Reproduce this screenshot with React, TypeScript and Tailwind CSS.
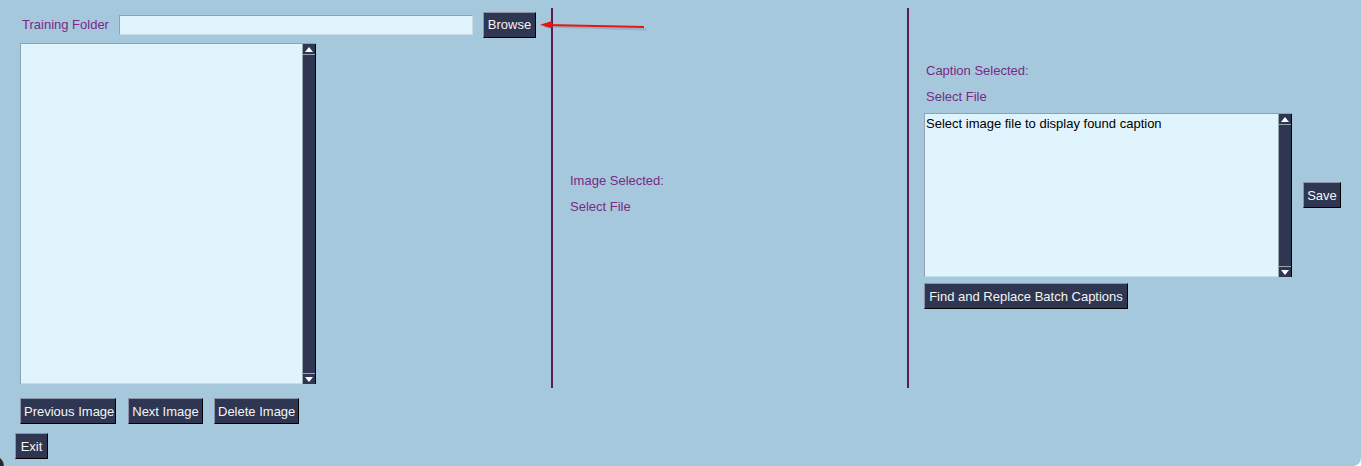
import React from "react";

const font = { fontFamily: '"Liberation Sans", Arial, sans-serif' };

function TkButton({ children, className = "" }: { children: React.ReactNode; className?: string }) {
  return (
    <button
      className={`h-[26px] px-[3px] bg-[#2e3651] text-[#f4f4f4] text-[13px] leading-none whitespace-nowrap border border-t-[#8c93a6] border-l-[#8c93a6] border-b-black border-r-black ${className}`}
    >
      {children}
    </button>
  );
}

function Scrollbar() {
  return (
    <div className="w-[14px] h-full flex flex-col bg-[#2e3651] border-l border-[#9aa6b2] border-r border-r-black">
      <div className="h-[11px] flex items-center justify-center border-b border-[#9aa6b2]">
        <svg width="8" height="5" viewBox="0 0 8 5">
          <path d="M0 5 L4 0 L8 5 Z" fill="#ffffff" />
        </svg>
      </div>
      <div className="flex-1" />
      <div className="h-[11px] flex items-center justify-center border-t border-[#9aa6b2]">
        <svg width="8" height="5" viewBox="0 0 8 5">
          <path d="M0 0 L4 5 L8 0 Z" fill="#ffffff" />
        </svg>
      </div>
    </div>
  );
}

export default function App() {
  return (
    <div className="relative w-[1361px] h-[466px] bg-[#a6c8dc] overflow-hidden rounded-br-[8px]" style={font}>
      <div className="flex">
        {/* Left column */}
        <div className="w-[551px] pl-[20px] pt-[12px]">
          <div className="flex items-center h-[25px]">
            <span className="ml-[2px] w-[97px] text-[13px] text-[#7a2a86]">Training Folder</span>
            <input
              className="w-[354px] h-[20px] bg-[#e0f4fe] border border-[#8ea2b0] border-b-[#c8dce8] border-r-[#c8dce8] outline-none"
              defaultValue=""
            />
            <TkButton className="ml-[10px] w-[53px]">Browse</TkButton>
          </div>

          <div className="mt-[6px] flex w-[296px] h-[341px] border-t border-l border-[#8ea2b0]">
            <div className="flex-1 bg-[#e0f4fe] border-b border-[#c8dce8]" />
            <Scrollbar />
          </div>

          <div className="mt-[14px] flex">
            <TkButton className="w-[96px]">Previous Image</TkButton>
            <TkButton className="ml-[12px] w-[75px]">Next Image</TkButton>
            <TkButton className="ml-[11px] w-[85px]">Delete Image</TkButton>
          </div>

          <div className="mt-[9px] -ml-[5px]">
            <TkButton className="w-[33px]">Exit</TkButton>
          </div>
        </div>

        <div className="mt-[8px] w-[2px] h-[380px] bg-[#5c1a55]" />

        {/* Middle column */}
        <div className="w-[354px] pl-[17px] pt-[168px] text-[13px] text-[#7a2a86]">
          <div className="h-[26px] leading-[26px]">Image Selected:</div>
          <div className="h-[26px] leading-[26px]">Select File</div>
        </div>

        <div className="mt-[8px] w-[2px] h-[380px] bg-[#5c1a55]" />

        {/* Right column */}
        <div className="flex-1 pl-[15px] pt-[58px]">
          <div className="pl-[2px] text-[13px] text-[#7a2a86]">
            <div className="h-[26px] leading-[26px]">Caption Selected:</div>
            <div className="h-[26px] leading-[26px]">Select File</div>
          </div>
          <div className="mt-[3px] flex items-center">
            <div className="flex w-[368px] h-[164px] border-t border-l border-[#8ea2b0]">
              <div className="flex-1 bg-[#e0f4fe] border-b border-[#c8dce8] pl-[1px] pt-[2px] text-[13px] text-black leading-[15px]">
                Select image file to display found caption
              </div>
              <Scrollbar />
            </div>
            <TkButton className="ml-[11px] w-[38px]">Save</TkButton>
          </div>
          <TkButton className="mt-[6px] w-[204px]">Find and Replace Batch Captions</TkButton>
        </div>
      </div>

      {/* Red annotation arrow */}
      <svg className="absolute left-[536px] top-[16px]" width="116" height="18" viewBox="0 0 116 18">
        <line x1="8" y1="10.5" x2="110" y2="13.5" stroke="#6a8898" strokeOpacity="0.35" strokeWidth="2" />
        <line x1="10" y1="9" x2="108" y2="11" stroke="#ee1111" strokeWidth="2" />
        <path d="M4 8.8 L16 5 L16 12.6 Z" fill="#ee1111" />
      </svg>

      {/* bottom-left window corner */}
      <div className="absolute -left-[6px] bottom-0 w-[10px] h-[10px] rounded-tr-[10px] bg-[#2a2a2a]" />
    </div>
  );
}
